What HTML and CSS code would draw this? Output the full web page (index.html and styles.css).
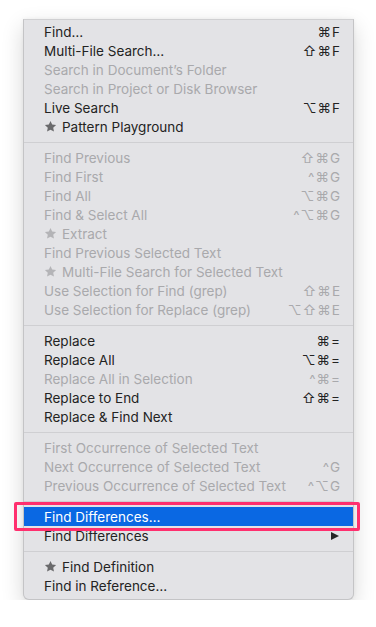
FILE: index.html
```html
<!DOCTYPE html>
<html>
<head>
<meta charset="utf-8">
<link rel="stylesheet" href="styles.css">
</head>
<body>
<div class="menu">
  <div class="group">
    <div class="item"><span class="label">Find…</span><span class="key">⌘F</span></div>
    <div class="item"><span class="label">Multi-File Search…</span><span class="key">⇧⌘F</span></div>
    <div class="item off"><span class="label">Search in Document’s Folder</span></div>
    <div class="item off"><span class="label">Search in Project or Disk Browser</span></div>
    <div class="item"><span class="label">Live Search</span><span class="key">⌥⌘F</span></div>
    <div class="item"><span class="label"><svg class="star" viewBox="0 0 24 24"><path d="M12 1.8l3.1 6.6 7.2.9-5.3 5 1.4 7.1L12 17.9l-6.4 3.5 1.4-7.1-5.3-5 7.2-.9z"/></svg>Pattern Playground</span></div>
  </div>
  <div class="sep"></div>
  <div class="group">
    <div class="item off"><span class="label">Find Previous</span><span class="key">⇧⌘G</span></div>
    <div class="item off"><span class="label">Find First</span><span class="key">^⌘G</span></div>
    <div class="item off"><span class="label">Find All</span><span class="key">⌥⌘G</span></div>
    <div class="item off"><span class="label">Find &amp; Select All</span><span class="key">^⌥⌘G</span></div>
    <div class="item off"><span class="label"><svg class="star" viewBox="0 0 24 24"><path d="M12 1.8l3.1 6.6 7.2.9-5.3 5 1.4 7.1L12 17.9l-6.4 3.5 1.4-7.1-5.3-5 7.2-.9z"/></svg>Extract</span></div>
    <div class="item off"><span class="label">Find Previous Selected Text</span></div>
    <div class="item off"><span class="label"><svg class="star" viewBox="0 0 24 24"><path d="M12 1.8l3.1 6.6 7.2.9-5.3 5 1.4 7.1L12 17.9l-6.4 3.5 1.4-7.1-5.3-5 7.2-.9z"/></svg>Multi-File Search for Selected Text</span></div>
    <div class="item off"><span class="label">Use Selection for Find (grep)</span><span class="key">⇧⌘E</span></div>
    <div class="item off"><span class="label">Use Selection for Replace (grep)</span><span class="key">⌥⇧⌘E</span></div>
  </div>
  <div class="sep"></div>
  <div class="group">
    <div class="item"><span class="label">Replace</span><span class="key">⌘=</span></div>
    <div class="item"><span class="label">Replace All</span><span class="key">⌥⌘=</span></div>
    <div class="item off"><span class="label">Replace All in Selection</span><span class="key">^⌘=</span></div>
    <div class="item"><span class="label">Replace to End</span><span class="key">⇧⌘=</span></div>
    <div class="item"><span class="label">Replace &amp; Find Next</span></div>
  </div>
  <div class="sep"></div>
  <div class="group">
    <div class="item off"><span class="label">First Occurrence of Selected Text</span></div>
    <div class="item off"><span class="label">Next Occurrence of Selected Text</span><span class="key">^G</span></div>
    <div class="item off"><span class="label">Previous Occurrence of Selected Text</span><span class="key">^⌥G</span></div>
  </div>
  <div class="sep"></div>
  <div class="group">
    <div class="item selected"><span class="label">Find Differences…</span></div>
    <div class="item"><span class="label">Find Differences</span><span class="arrow"></span></div>
  </div>
  <div class="sep"></div>
  <div class="group">
    <div class="item"><span class="label"><svg class="star" viewBox="0 0 24 24"><path d="M12 1.8l3.1 6.6 7.2.9-5.3 5 1.4 7.1L12 17.9l-6.4 3.5 1.4-7.1-5.3-5 7.2-.9z"/></svg>Find Definition</span></div>
    <div class="item"><span class="label">Find in Reference…</span></div>
  </div>
</div>
<div class="callout"></div>
</body>
</html>
```
FILE: styles.css
```css
html, body {
  margin: 0;
  padding: 0;
  background: #ffffff;
}
body {
  padding: 19px 0 0 23px;
  font-family: Inter, "Liberation Sans", sans-serif;
  font-size: 13.5px;
  color: #232323;
}
.menu {
  width: 329px;
  background: #e3e3e6;
  border: 1px solid #c4c4c6;
  border-top-color: #d0d0d2;
  border-radius: 0 0 6px 6px;
  box-shadow: 0 8px 22px rgba(0, 0, 0, 0.16), 0 0 4px rgba(0, 0, 0, 0.05);
  padding: 2px 0 4px;
}
.group {
  display: flex;
  flex-direction: column;
}
.item {
  height: 19px;
  display: flex;
  align-items: center;
  justify-content: space-between;
  padding: 0 12px 0 20px;
  white-space: nowrap;
}
.label {
  display: flex;
  align-items: center;
}
.key {
  font-family: Inter, "DejaVu Sans", sans-serif;
  letter-spacing: 1px;
}
.off {
  color: #a9a9ac;
}
.star {
  width: 13px;
  height: 13px;
  margin-right: 5px;
  fill: #6a6a6c;
}
.off .star {
  fill: #b4b4b7;
}
.selected {
  background: #0a68e3;
  color: #ffffff;
}
.arrow {
  width: 0;
  height: 0;
  border-top: 4.5px solid transparent;
  border-bottom: 4.5px solid transparent;
  border-left: 8px solid #262626;
  margin-right: 2px;
}
.sep {
  height: 12px;
  display: flex;
  align-items: center;
}
.sep::before {
  content: "";
  flex: 1;
  height: 1px;
  background: #cfcfd2;
}
.callout {
  position: absolute;
  left: 14px;
  top: 502px;
  width: 340px;
  height: 23px;
  border: 3px solid #ff2f6e;
  border-radius: 2px;
}
```
